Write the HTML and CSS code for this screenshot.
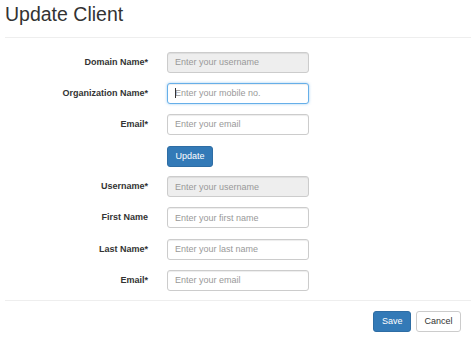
FILE: index.html
```html
<!DOCTYPE html>
<html lang="en">
<head>
<meta charset="utf-8">
<title>Update Client</title>
<link rel="stylesheet" href="styles.css">
</head>
<body>
<div class="modal">
  <div class="modal-header">
    <h2 class="modal-title">Update Client</h2>
  </div>
  <form class="modal-body">
    <div class="row">
      <label class="label">Domain Name<span class="req">*</span></label>
      <div class="field"><input class="input" type="text" placeholder="Enter your username" disabled></div>
    </div>
    <div class="row">
      <label class="label">Organization Name<span class="req">*</span></label>
      <div class="field focused"><input class="input focus" type="text" placeholder="Enter your mobile no."></div>
    </div>
    <div class="row">
      <label class="label">Email<span class="req">*</span></label>
      <div class="field"><input class="input" type="text" placeholder="Enter your email"></div>
    </div>
    <div class="row">
      <span class="label"></span>
      <div class="field"><button type="button" class="btn btn-primary">Update</button></div>
    </div>
    <div class="row">
      <label class="label">Username<span class="req">*</span></label>
      <div class="field"><input class="input" type="text" placeholder="Enter your username" disabled></div>
    </div>
    <div class="row">
      <label class="label">First Name</label>
      <div class="field"><input class="input" type="text" placeholder="Enter your first name"></div>
    </div>
    <div class="row">
      <label class="label">Last Name<span class="req">*</span></label>
      <div class="field"><input class="input" type="text" placeholder="Enter your last name"></div>
    </div>
    <div class="row">
      <label class="label">Email<span class="req">*</span></label>
      <div class="field"><input class="input" type="text" placeholder="Enter your email"></div>
    </div>
  </form>
  <div class="modal-footer">
    <button type="button" class="btn btn-primary">Save</button>
    <button type="button" class="btn btn-default">Cancel</button>
  </div>
</div>
</body>
</html>
```
FILE: styles.css
```css
html, body {
  margin: 0;
  padding: 0;
  background: #ffffff;
}

body {
  font-family: "Liberation Sans", Arial, sans-serif;
  color: #333333;
}

.modal {
  margin-left: 5px;
  width: 466px;
}

.modal-header {
  padding: 3px 0 12px 0;
  border-bottom: 1px solid #eeeeee;
}

.modal-title {
  margin: 0;
  font-size: 19.5px;
  line-height: 22px;
  font-weight: normal;
  color: #333333;
}

.modal-body {
  margin: 0;
  padding: 13px 0 9.6px 0;
  display: flex;
  flex-direction: column;
  gap: 10.2px;
}

.row {
  display: flex;
  align-items: center;
  gap: 19px;
  height: 21px;
}

.label {
  width: 143px;
  text-align: right;
  font-size: 9px;
  font-weight: bold;
  color: #333333;
}

.req {
  font-weight: bold;
}

.field {
  position: relative;
  width: 142px;
  height: 21px;
}

.input {
  box-sizing: border-box;
  width: 142px;
  height: 21px;
  margin: 0;
  padding: 0 7px;
  border: 1px solid #cccccc;
  border-radius: 3px;
  background: #ffffff;
  font-family: "Liberation Sans", Arial, sans-serif;
  font-size: 9px;
  color: #555555;
  box-shadow: inset 0 1px 1px rgba(0, 0, 0, 0.075);
  outline: none;
}

.input::placeholder {
  color: #999999;
}

.input:disabled {
  background: #eeeeee;
}

.input.focus {
  border-color: #66afe9;
  box-shadow: inset 0 1px 1px rgba(0, 0, 0, 0.075), 0 0 3px rgba(102, 175, 233, 0.6);
}

.focused::after {
  content: "";
  position: absolute;
  left: 8px;
  top: 6px;
  width: 1px;
  height: 10px;
  background: #333333;
}

.btn {
  box-sizing: border-box;
  height: 21px;
  margin: 0;
  padding: 0 7.5px;
  border: 1px solid transparent;
  border-radius: 3px;
  font-family: "Liberation Sans", Arial, sans-serif;
  font-size: 9px;
  line-height: 19px;
  cursor: pointer;
}

.btn-primary {
  background: #337ab7;
  border-color: #2e6da4;
  color: #ffffff;
}

.btn-default {
  background: #ffffff;
  border-color: #cccccc;
  color: #333333;
}

.modal-footer {
  display: flex;
  justify-content: flex-end;
  gap: 5px;
  padding: 10px 10px 0 0;
  border-top: 1px solid #eeeeee;
}
```
